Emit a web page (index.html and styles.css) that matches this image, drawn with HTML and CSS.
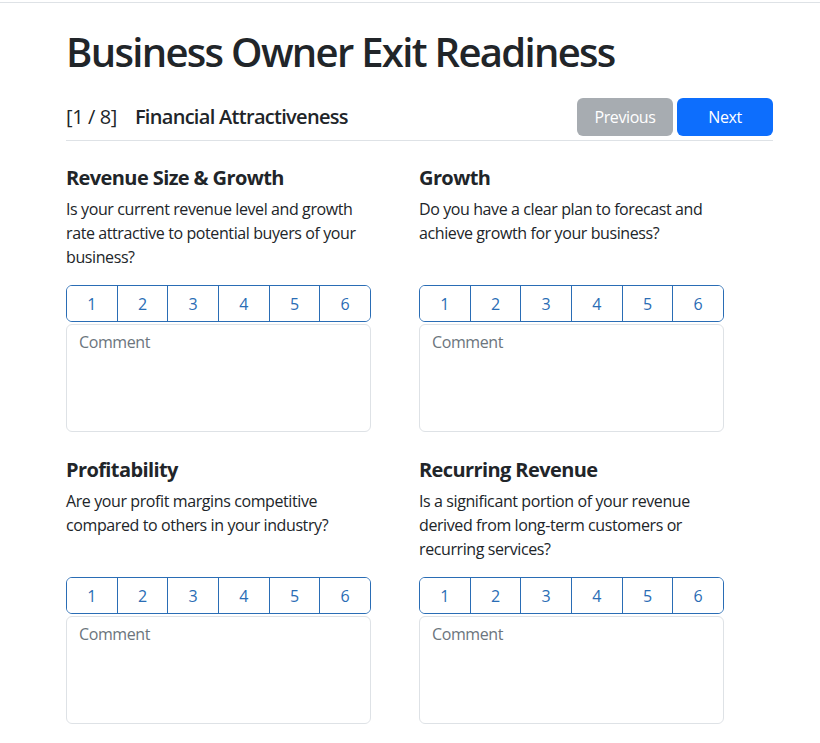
FILE: index.html
```html
<!DOCTYPE html>
<html lang="en">
<head>
<meta charset="utf-8">
<title>Business Owner Exit Readiness</title>
<link rel="stylesheet" href="styles.css">
</head>
<body>
<div class="topbar"></div>
<main class="container">
  <h1 class="title">Business Owner Exit Readiness</h1>
  <div class="section-head">
    <h5 class="section-title"><span class="step">[1 / 8]</span><span class="section-name">Financial Attractiveness</span></h5>
    <div class="nav-buttons">
      <button class="btn btn-prev" disabled>Previous</button>
      <button class="btn btn-next">Next</button>
    </div>
  </div>
  <div class="questions">
    <div class="question">
      <h5 class="q-title">Revenue Size &amp; Growth</h5>
      <p class="q-desc">Is your current revenue level and growth rate attractive to potential buyers of your business?</p>
      <div class="rating"><button>1</button><button>2</button><button>3</button><button>4</button><button>5</button><button>6</button></div>
      <textarea class="comment" placeholder="Comment"></textarea>
    </div>
    <div class="question">
      <h5 class="q-title">Growth</h5>
      <p class="q-desc">Do you have a clear plan to forecast and achieve growth for your business?</p>
      <div class="rating"><button>1</button><button>2</button><button>3</button><button>4</button><button>5</button><button>6</button></div>
      <textarea class="comment" placeholder="Comment"></textarea>
    </div>
    <div class="question">
      <h5 class="q-title">Profitability</h5>
      <p class="q-desc">Are your profit margins competitive compared to others in your industry?</p>
      <div class="rating"><button>1</button><button>2</button><button>3</button><button>4</button><button>5</button><button>6</button></div>
      <textarea class="comment" placeholder="Comment"></textarea>
    </div>
    <div class="question">
      <h5 class="q-title">Recurring Revenue</h5>
      <p class="q-desc">Is a significant portion of your revenue derived from long-term customers or recurring services?</p>
      <div class="rating"><button>1</button><button>2</button><button>3</button><button>4</button><button>5</button><button>6</button></div>
      <textarea class="comment" placeholder="Comment"></textarea>
    </div>
  </div>
</main>
</body>
</html>
```

FILE: styles.css
```css
* { box-sizing: border-box; }
html, body { margin: 0; padding: 0; background: #fff; }
body {
  font-family: "Open Sans", "Noto Sans", "Liberation Sans", sans-serif;
  color: #212529;
  font-size: 16px;
  line-height: 1.5;
  letter-spacing: -0.025em;
}
.topbar {
  height: 3px;
  border-bottom: 1px solid #dee2e6;
}
.container {
  width: 707px;
  margin-left: 66px;
  padding-top: 25px;
}
.title {
  margin: 0;
  font-size: 40px;
  font-weight: 550;
  line-height: 1.2;
  letter-spacing: -0.042em;
}
.section-head {
  margin-top: 22px;
  display: flex;
  justify-content: space-between;
  align-items: center;
  padding-bottom: 4px;
  border-bottom: 1px solid #dee2e6;
}
.section-title {
  margin: 0;
  font-size: 20px;
  font-weight: 400;
  line-height: 1.2;
  display: flex;
  gap: 18px;
}
.section-name { font-weight: 600; letter-spacing: -0.035em; }
.nav-buttons { display: flex; gap: 4px; }
.btn {
  width: 96px;
  height: 38px;
  border: 0;
  border-radius: 6px;
  font-family: inherit;
  font-size: 16px;
  letter-spacing: -0.025em;
  color: #fff;
}
.btn-prev { background: #a7acb1; }
.btn-next { background: #0d6efd; }
.questions {
  display: grid;
  grid-template-columns: 353px 354px;
  row-gap: 26px;
  padding-top: 25px;
}
.question { width: 305px; display: flex; flex-direction: column; }
.q-title {
  margin: 0 0 7px;
  font-size: 20px;
  font-weight: 700;
  line-height: 1.2;
  letter-spacing: -0.03em;
}
.q-desc {
  margin: 0 0 16px;
  min-height: 72px;
  line-height: 24px;
}
.rating {
  display: flex;
  height: 37px;
  border: 1px solid #2a6db5;
  border-radius: 6px;
  overflow: hidden;
}
.rating button {
  flex: 1;
  border: 0;
  border-left: 1px solid #2a6db5;
  background: #fff;
  color: #2a6db5;
  font-family: inherit;
  font-size: 16px;
  padding: 0;
}
.rating button:first-child { border-left: 0; }
.comment {
  margin-top: 2px;
  height: 108px;
  border: 1px solid #dee2e6;
  border-radius: 6px;
  padding: 6px 12px;
  font-family: inherit;
  font-size: 16px;
  letter-spacing: -0.025em;
  resize: none;
}
.comment::placeholder { color: #6c757d; }
```
